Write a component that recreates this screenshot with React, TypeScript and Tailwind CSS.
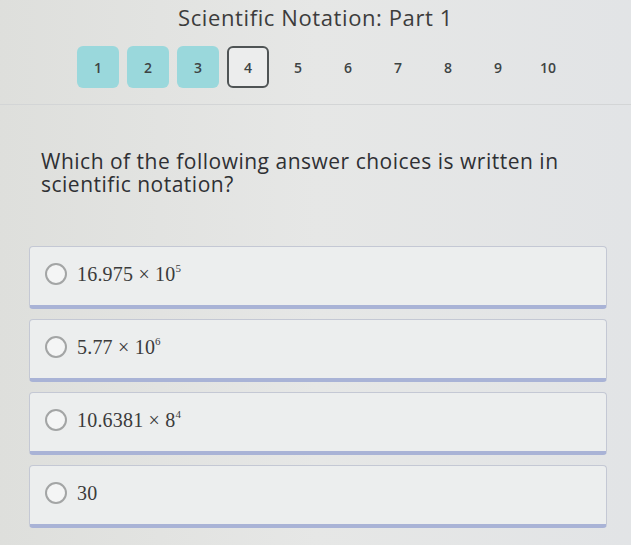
const pages = [1, 2, 3, 4, 5, 6, 7, 8, 9, 10];

function Radio() {
  return <span className="w-[22px] h-[22px] rounded-full border-2 border-[#a3a5a5] bg-[#f4f5f5] shrink-0" />;
}

function Option({ children }: { children: React.ReactNode }) {
  return (
    <div className="h-[63px] rounded-[4px] border border-[#c4c8d4] border-b-[4px] border-b-[#a9b3d6] bg-[#eceeee] flex items-start pt-[16px] pl-[15px] gap-[10px]">
      <Radio />
      <span className="text-[20px] text-[#3b3b3b] tracking-[0.2px] leading-[22px]" style={{ fontFamily: '"Liberation Serif", serif' }}>
        {children}
      </span>
    </div>
  );
}

function Sup({ children }: { children: React.ReactNode }) {
  return <sup className="text-[11px] top-[-9px]">{children}</sup>;
}

export default function App() {
  return (
    <div className="w-[631px] h-[545px] overflow-hidden bg-gradient-to-r from-[#dedfdc] via-[#e6e7e6] to-[#e2e4e6]" style={{ fontFamily: '"Open Sans", sans-serif' }}>
      <h1 className="text-center text-[22px] leading-[26px] pt-[4px] font-medium tracking-[0.6px] text-[#3c3c3c]">Scientific Notation: Part 1</h1>
      <div className="flex gap-[8px] pl-[77px] mt-[16px]">
        {pages.map((p) => (
          <div
            key={p}
            className={
              "w-[42px] h-[42px] flex items-center justify-center text-[14px] font-semibold text-[#3e4444] rounded-[6px] " +
              (p < 4 ? "bg-[#9ad8dc]" : p === 4 ? "border-2 border-[#4f5455] bg-[#eceded]" : "")
            }
          >
            {p}
          </div>
        ))}
      </div>
      <div className="mt-[16px] h-px bg-[#d3d5d6]" />
      <p className="pl-[41px] w-[590px] mt-[45px] text-[21px] leading-[23px] font-medium text-[#2f3034] tracking-[0.5px]">
        Which of the following answer choices is written in scientific notation?
      </p>
      <div className="ml-[29px] w-[578px] mt-[50px] flex flex-col gap-[10px]">
        <Option>16.975 × 10<Sup>5</Sup></Option>
        <Option>5.77 × 10<Sup>6</Sup></Option>
        <Option>10.6381 × 8<Sup>4</Sup></Option>
        <Option>30</Option>
      </div>
    </div>
  );
}
